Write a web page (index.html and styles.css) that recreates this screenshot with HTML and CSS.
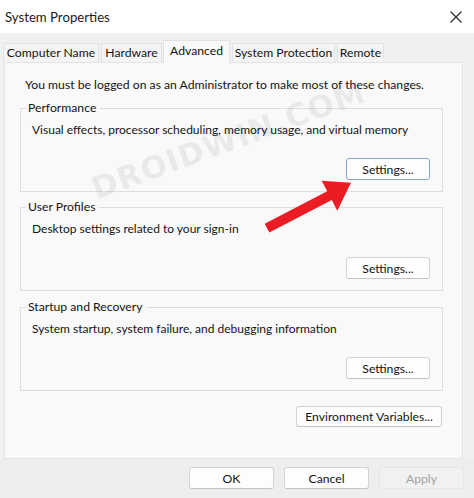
FILE: index.html
```html
<!DOCTYPE html>
<html>
<head>
<meta charset="utf-8">
<link rel="stylesheet" href="styles.css">
</head>
<body>
<div class="window">
  <div class="titlebar">
    <span class="title">System Properties</span>
    <svg class="close" width="14" height="14" viewBox="0 0 14 14"><path d="M1.5 1.5 L12.5 12.5 M12.5 1.5 L1.5 12.5" stroke="#2b2b2b" stroke-width="1.2" fill="none"/></svg>
  </div>
  <div class="tabs">
    <div class="tab t-cn">Computer Name</div>
    <div class="tab t-hw">Hardware</div>
    <div class="tab active t-adv">Advanced</div>
    <div class="tab t-sp">System Protection</div>
    <div class="tab t-rm">Remote</div>
  </div>
  <div class="panel">
    <p class="note">You must be logged on as an Administrator to make most of these changes.</p>
    <div class="group">
      <span class="legend">Performance</span>
      <p class="desc">Visual effects, processor scheduling, memory usage, and virtual memory</p>
      <button class="btn settings focused">Settings...</button>
    </div>
    <div class="group g2">
      <span class="legend">User Profiles</span>
      <p class="desc">Desktop settings related to your sign-in</p>
      <button class="btn settings">Settings...</button>
    </div>
    <div class="group g3">
      <span class="legend">Startup and Recovery</span>
      <p class="desc">System startup, system failure, and debugging information</p>
      <button class="btn settings">Settings...</button>
    </div>
    <div class="env-row">
      <button class="btn env">Environment Variables...</button>
    </div>
  </div>
  <div class="footer">
    <button class="btn dlg">OK</button>
    <button class="btn dlg">Cancel</button>
    <button class="btn dlg disabled">Apply</button>
  </div>
  <div class="watermark">DROIDWIN.COM</div>
  <svg class="arrow" width="474" height="498" viewBox="0 0 474 498">
    <polygon points="264.7,223.8 327.2,191.3 321.7,180.7 351,182.7 337.3,210.7 331.8,200.1 269.3,232.6" fill="#ec1c24"/>
  </svg>
</div>
</body>
</html>
```
FILE: styles.css
```css
* { box-sizing: border-box; }
html, body { margin: 0; padding: 0; }
body {
  width: 474px;
  height: 498px;
  overflow: hidden;
  background: #f0f0f0;
  font-family: Lato, "Noto Sans", sans-serif;
  font-size: 12.2px;
  color: #141414;
}
.window {
  position: relative;
  width: 474px;
  height: 498px;
  display: flex;
  flex-direction: column;
  background: #f0f0f0;
  white-space: nowrap;
}
.titlebar {
  height: 33px;
  background: #ffffff;
  display: flex;
  align-items: center;
  justify-content: space-between;
  padding: 0 11px 0 5px;
}
.title {
  font-size: 13.2px;
  color: #1b1b1b;
}
.close { display: block; margin-top: 1px; }
.tabs {
  height: 29px;
  display: flex;
  align-items: flex-end;
  padding-left: 3px;
  gap: 2px;
}
.tab {
  height: 19px;
  line-height: 18px;
  background: #f4f4f4;
  border: 1px solid #e2e2e2;
  border-bottom: none;
  text-align: center;
  color: #141414;
}
.t-cn { width: 96px; }
.t-hw { width: 61px; }
.t-adv { width: 67px; margin-left: -1px; }
.t-sp { width: 103px; }
.t-rm { width: 47px; }
.tab.active {
  height: 23px;
  line-height: 20px;
  background: #f9f9f9;
  margin-bottom: -1px;
  position: relative;
  z-index: 1;
}
.panel {
  margin-left: 4px;
  width: 459px;
  height: 397px;
  background: #f9f9f9;
  border: 1px solid #e4e4e4;
  padding: 14px 19px 0 15px;
  display: flex;
  flex-direction: column;
}
.note {
  margin: 0 0 15px 5px;
  line-height: 16px;
}
.group {
  position: relative;
  height: 84px;
  border: 1px solid #dedede;
  padding: 13px 12px 0 11px;
  display: flex;
  flex-direction: column;
  margin-bottom: 15px;
}
.g2 { margin-bottom: 16px; }
.g3 { margin-bottom: 15px; }
.legend {
  position: absolute;
  top: -9px;
  left: 5px;
  padding: 0 4px 0 2px;
  background: #f9f9f9;
  line-height: 16px;
}
.desc {
  margin: 0;
  line-height: 16px;
  font-size: 12px;
}
.btn {
  font-family: inherit;
  font-size: 12.2px;
  color: #141414;
  background: #fdfdfd;
  border: 1px solid #d3d3d3;
  border-bottom-color: #c4c4c4;
  border-radius: 3px;
  padding: 0;
  height: 22px;
}
.settings {
  width: 84px;
  align-self: flex-end;
  margin-top: 20px;
}
.focused { border: 1px solid #7ea6cf; }
.env-row {
  display: flex;
  justify-content: flex-end;
  margin-right: 1px;
}
.env { width: 146px; height: 21px; }
.footer {
  flex: 1;
  background: #eeeeee;
  display: flex;
  align-items: center;
  justify-content: flex-end;
  gap: 10px;
  padding: 0 10px 1px 0;
}
.dlg { width: 85px; }
.disabled {
  color: #a2a2a2;
  background: #f1f1f1;
  border-color: #e6e6e6;
}
.watermark {
  position: absolute;
  left: 84px;
  top: 122px;
  font-family: "DejaVu Sans", sans-serif;
  font-weight: bold;
  font-size: 31px;
  letter-spacing: 1px;
  color: rgba(0, 0, 0, 0.075);
  transform: rotate(-20deg);
  transform-origin: center;
  pointer-events: none;
}
.arrow {
  position: absolute;
  left: 0;
  top: 0;
  pointer-events: none;
}
```
